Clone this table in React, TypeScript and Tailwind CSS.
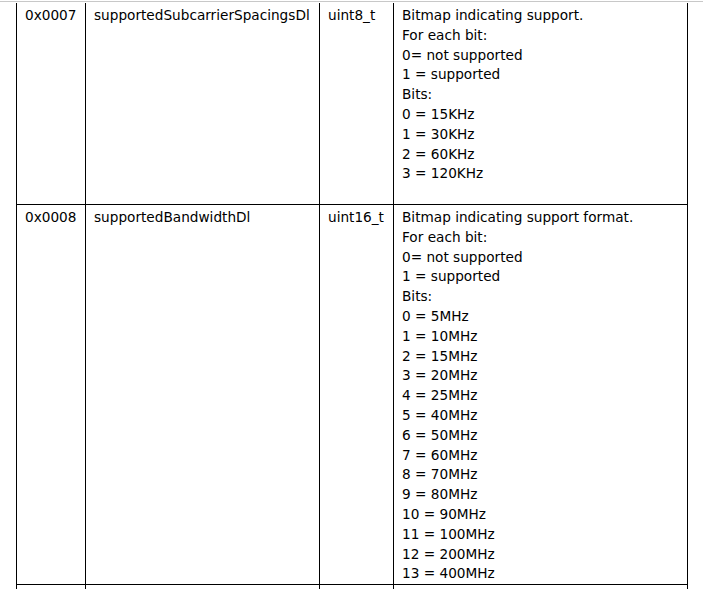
import React from "react";

const row1 = [
  "Bitmap indicating support.",
  "For each bit:",
  "0= not supported",
  "1 = supported",
  "Bits:",
  "0 = 15KHz",
  "1 = 30KHz",
  "2 = 60KHz",
  "3 = 120KHz",
  "\u00a0",
];

const row2 = [
  "Bitmap indicating support format.",
  "For each bit:",
  "0= not supported",
  "1 = supported",
  "Bits:",
  "0 = 5MHz",
  "1 = 10MHz",
  "2 = 15MHz",
  "3 = 20MHz",
  "4 = 25MHz",
  "5 = 40MHz",
  "6 = 50MHz",
  "7 = 60MHz",
  "8 = 70MHz",
  "9 = 80MHz",
  "10 = 90MHz",
  "11 = 100MHz",
  "12 = 200MHz",
  "13 = 400MHz",
];

function Row({
  id,
  name,
  type,
  lines,
  last,
}: {
  id: string;
  name: string;
  type: string;
  lines: string[];
  last?: boolean;
}) {
  const cell = "border-l border-black pl-2 pr-1 pt-[3px] pb-0";
  return (
    <div
      className={`grid grid-cols-[69px_234px_74px_295px] ${
        last ? "" : "border-b border-black"
      }`}
    >
      <div className={cell}>{id}</div>
      <div className={cell}>{name}</div>
      <div className={cell}>{type}</div>
      <div className={`${cell} border-r`}>
        {lines.map((l, i) => (
          <div key={i}>{l}</div>
        ))}
      </div>
    </div>
  );
}

export default function App() {
  return (
    <div
      className="w-[703px] h-[589px] overflow-hidden bg-white text-black text-[13.65px] leading-[19.8px]"
      style={{ fontFamily: '"DejaVu Sans", Verdana, sans-serif' }}
    >
      <div className="h-px mt-px bg-[#c8c8c8]" />
      <div className="ml-[16px] mt-px w-[672px]">
        <Row
          id="0x0007"
          name="supportedSubcarrierSpacingsDl"
          type="uint8_t"
          lines={row1}
        />
        <Row
          id="0x0008"
          name="supportedBandwidthDl"
          type="uint16_t"
          lines={row2}
        />
        <Row id="" name="" type="" lines={["\u00a0"]} last />
      </div>
    </div>
  );
}
